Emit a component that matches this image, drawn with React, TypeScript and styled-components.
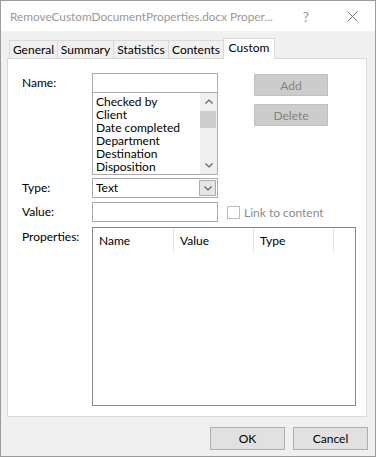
import React from "react";
import styled, { createGlobalStyle } from "styled-components";

const Global = createGlobalStyle`
  html, body { margin: 0; padding: 0; background: #fff; }
  * { box-sizing: border-box; }
  body { font-family: Lato, "Noto Sans", sans-serif; font-size: 12px; color: #000; }
`;

const Window = styled.div`
  width: 376px;
  height: 457px;
  border: 1px solid #9b9b9b;
  display: flex;
  flex-direction: column;
  overflow: hidden;
`;

const TitleBar = styled.div`
  height: 30px;
  background: #fff;
  display: flex;
  align-items: center;
  padding-left: 9px;
`;

const TitleText = styled.div`
  flex: 1;
  color: #999;
  font-size: 11.8px;
  white-space: nowrap;
`;

const TitleButton = styled.div<{ $w: number }>`
  width: ${(p) => p.$w}px;
  height: 30px;
  display: flex;
  align-items: center;
  justify-content: center;
  color: #9a9a9a;
  font-size: 14px;
`;

const Body = styled.div`
  flex: 1;
  background: #f0f0f0;
  padding: 7px 8px 6px 6px;
  display: flex;
  flex-direction: column;
`;

const TabStrip = styled.div`
  height: 20px;
  display: flex;
  align-items: flex-end;
  padding-left: 2px;
`;

const Tab = styled.div<{ $w: number; $active?: boolean }>`
  width: ${(p) => p.$w}px;
  height: ${(p) => (p.$active ? 21 : 18)}px;
  margin-bottom: ${(p) => (p.$active ? -1 : 0)}px;
  margin-left: -1px;
  &:first-child { margin-left: 0; }
  border: 1px solid #d9d9d9;
  border-bottom: none;
  background: ${(p) => (p.$active ? "#fff" : "#f0f0f0")};
  position: relative;
  z-index: ${(p) => (p.$active ? 1 : 0)};
  display: flex;
  justify-content: center;
  align-items: ${(p) => (p.$active ? "flex-start" : "center")};
  padding-top: 1px;
  line-height: 16px;
  white-space: nowrap;
`;

const Panel = styled.div`
  height: 359px;
  background: #fff;
  border: 1px solid #d9d9d9;
  padding: 14px 0 0 14px;
  display: flex;
  flex-direction: column;
`;

const Row = styled.div<{ $mt?: number }>`
  display: flex;
  align-items: flex-start;
  margin-top: ${(p) => p.$mt ?? 0}px;
`;

const Label = styled.div`
  width: 70px;
  line-height: 20px;
  white-space: nowrap;
`;

const FieldColumn = styled.div`
  width: 126px;
  display: flex;
  flex-direction: column;
`;

const TextBox = styled.div`
  width: 126px;
  height: 20px;
  border: 1px solid #ababab;
  background: #fff;
`;

const ListBox = styled.div`
  height: 82px;
  border: 1px solid #ababab;
  border-top: none;
  display: flex;
`;

const ListItems = styled.div`
  flex: 1;
  padding: 2px 0 0 3px;
`;

const ListItem = styled.div`
  line-height: 13px;
  height: 13px;
  white-space: nowrap;
`;

const ScrollBar = styled.div`
  width: 17px;
  background: #f0f0f0;
  display: flex;
  flex-direction: column;
`;

const ScrollArrow = styled.div`
  height: 17px;
  display: flex;
  align-items: center;
  justify-content: center;
`;

const ScrollTrack = styled.div`
  flex: 1;
  padding: 1px 1px 0 0;
`;

const Thumb = styled.div`
  height: 17px;
  background: #cdcdcd;
`;

const ButtonColumn = styled.div`
  margin-left: 36px;
  margin-top: 1px;
  display: flex;
  flex-direction: column;
  gap: 8px;
`;

const DisabledButton = styled.div`
  width: 74px;
  height: 22px;
  background: #cccccc;
  border: 1px solid #bfbfbf;
  color: #838383;
  display: flex;
  align-items: center;
  justify-content: center;
`;

const Select = styled.div`
  width: 126px;
  height: 20px;
  border: 1px solid #ababab;
  background: #fff;
  display: flex;
  align-items: center;
  padding-left: 3px;
`;

const SelectText = styled.div`
  flex: 1;
  line-height: 16px;
`;

const DropButton = styled.div`
  width: 17px;
  height: 16px;
  margin-right: 1px;
  background: #e5e5e5;
  border: 1px solid #acacac;
  display: flex;
  align-items: center;
  justify-content: center;
`;

const CheckWrap = styled.div`
  margin-left: 9px;
  height: 20px;
  display: flex;
  align-items: center;
  gap: 4px;
  color: #8a8a8a;
  white-space: nowrap;
`;

const CheckBox = styled.div`
  width: 13px;
  height: 13px;
  border: 1px solid #bcbcbc;
  background: #fff;
`;

const ListView = styled.div`
  width: 264px;
  height: 179px;
  border: 1px solid #828790;
  background: #fff;
`;

const HeaderRow = styled.div`
  display: flex;
  height: 25px;
`;

const HeaderCell = styled.div<{ $w: number }>`
  width: ${(p) => p.$w}px;
  border-right: 1px solid #e5e5e5;
  padding-left: 6px;
  line-height: 25px;
  white-space: nowrap;
`;

const Footer = styled.div`
  margin-top: 10px;
  margin-right: -1px;
  display: flex;
  justify-content: flex-end;
  gap: 8px;
`;

const Button = styled.div`
  width: 75px;
  height: 23px;
  background: #e1e1e1;
  border: 1px solid #adadad;
  display: flex;
  align-items: center;
  justify-content: center;
`;

const Chevron = ({ up }: { up?: boolean }) => (
  <svg width="8" height="5" viewBox="0 0 8 5">
    <path
      d={up ? "M0.5 4.5 L4 1 L7.5 4.5" : "M0.5 0.5 L4 4 L7.5 0.5"}
      fill="none"
      stroke="#606060"
      strokeWidth="1.2"
    />
  </svg>
);

const tabs = [
  { name: "General", w: 49 },
  { name: "Summary", w: 57 },
  { name: "Statistics", w: 56 },
  { name: "Contents", w: 56 },
  { name: "Custom", w: 52, active: true },
];

const items = ["Checked by", "Client", "Date completed", "Department", "Destination", "Disposition"];

export default function App() {
  return (
    <>
      <Global />
      <Window>
        <TitleBar>
          <TitleText>RemoveCustomDocumentProperties.docx Proper...</TitleText>
          <TitleButton $w={46}>?</TitleButton>
          <TitleButton $w={46}>
            <svg width="11" height="11" viewBox="0 0 11 11">
              <path d="M0.5 0.5 L10.5 10.5 M10.5 0.5 L0.5 10.5" stroke="#707070" strokeWidth="1" />
            </svg>
          </TitleButton>
        </TitleBar>
        <Body>
          <TabStrip>
            {tabs.map((t) => (
              <Tab key={t.name} $w={t.w} $active={t.active}>
                {t.name}
              </Tab>
            ))}
          </TabStrip>
          <Panel>
            <Row>
              <Label>Name:</Label>
              <FieldColumn>
                <TextBox />
                <ListBox>
                  <ListItems>
                    {items.map((i) => (
                      <ListItem key={i}>{i}</ListItem>
                    ))}
                  </ListItems>
                  <ScrollBar>
                    <ScrollArrow>
                      <Chevron up />
                    </ScrollArrow>
                    <ScrollTrack>
                      <Thumb />
                    </ScrollTrack>
                    <ScrollArrow>
                      <Chevron />
                    </ScrollArrow>
                  </ScrollBar>
                </ListBox>
              </FieldColumn>
              <ButtonColumn>
                <DisabledButton>Add</DisabledButton>
                <DisabledButton>Delete</DisabledButton>
              </ButtonColumn>
            </Row>
            <Row $mt={3}>
              <Label>Type:</Label>
              <Select>
                <SelectText>Text</SelectText>
                <DropButton>
                  <Chevron />
                </DropButton>
              </Select>
            </Row>
            <Row $mt={4}>
              <Label>Value:</Label>
              <TextBox />
              <CheckWrap>
                <CheckBox />
                Link to content
              </CheckWrap>
            </Row>
            <Row $mt={5}>
              <Label>Properties:</Label>
              <ListView>
                <HeaderRow>
                  <HeaderCell $w={81}>Name</HeaderCell>
                  <HeaderCell $w={80}>Value</HeaderCell>
                  <HeaderCell $w={80}>Type</HeaderCell>
                </HeaderRow>
              </ListView>
            </Row>
          </Panel>
          <Footer>
            <Button>OK</Button>
            <Button>Cancel</Button>
          </Footer>
        </Body>
      </Window>
    </>
  );
}
